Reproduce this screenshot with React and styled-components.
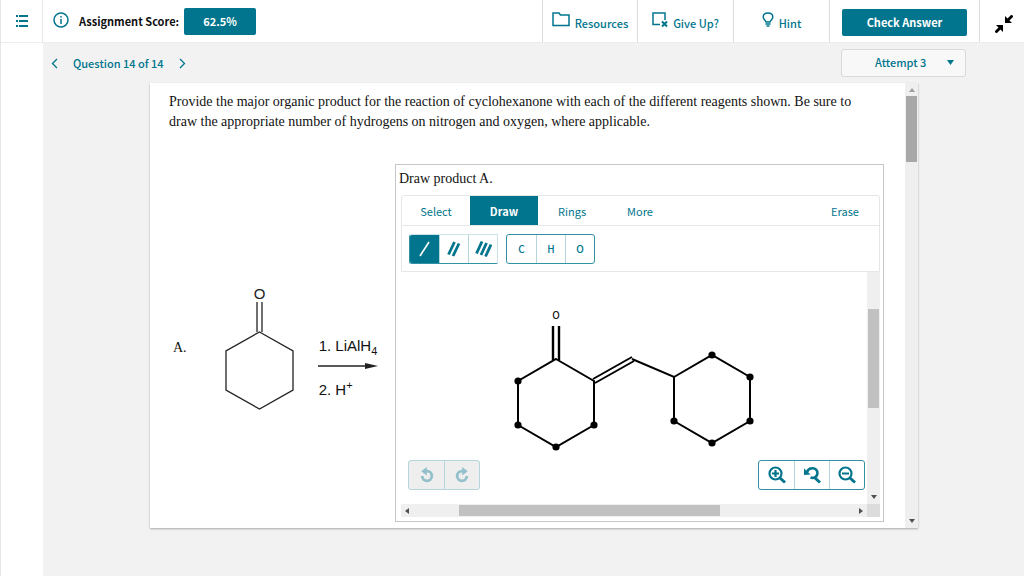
import React, { useState } from "react";
import styled, { createGlobalStyle, css } from "styled-components";

const teal = "#00758d";
const line = "#e6e6e6";

const GlobalStyle = createGlobalStyle`
  * { box-sizing: border-box; }
  body {
    margin: 0;
    background: #f2f2f2;
    font-family: "Noto Sans CJK SC", "Open Sans", sans-serif;
    font-size: 11px;
    line-height: 16px;
    color: #111;
  }
  svg { display: block; flex: none; }
`;

const plainButton = css`
  appearance: none;
  margin: 0;
  padding: 0;
  border: 0;
  background: none;
  color: ${teal};
  font: inherit;
  cursor: pointer;
`;

const Shell = styled.div`
  display: grid;
  grid-template-columns: 43px minmax(0, 1fr);
  min-height: 100vh;
`;

const Rail = styled.aside`
  background: #fff;
  border-left: 1px solid ${line};
`;

const RailButton = styled.button`
  ${plainButton}
  display: flex;
  align-items: center;
  justify-content: center;
  width: 100%;
  height: 43px;
  border-right: 1px solid ${line};
  border-bottom: 1px solid #ececec;
`;

const Header = styled.header`
  display: flex;
  height: 43px;
  background: #fff;
  border-bottom: 1px solid #ececec;
`;

const ScoreArea = styled.div`
  display: flex;
  align-items: center;
  flex: 1;
  padding-left: 10px;
`;

const IconButton = styled.button`
  ${plainButton}
  display: flex;
  padding-bottom: 2px;
`;

const ScoreLabel = styled.span`
  margin: 0 5px 0 10px;
  font-weight: 700;
`;

const Score = styled.output`
  width: 72px;
  border-radius: 2px;
  background: ${teal};
  color: #fff;
  font-weight: 700;
  line-height: 27px;
  text-align: center;
`;

const HeaderButton = styled.button`
  ${plainButton}
  display: flex;
  align-items: center;
  justify-content: center;
  gap: 5px;
  width: ${(p) => p.$width}px;
  border-left: 1px solid #dcdcdc;
  font-weight: 500;
  & svg { margin-bottom: 3px; }
  & span { padding-top: 3px; }
`;

const CollapseButton = styled.button`
  ${plainButton}
  display: flex;
  align-items: center;
  justify-content: center;
  width: 45px;
  padding: 5px 0 0 4px;
  border-left: 1px solid #dcdcdc;
  color: #000;
`;

const CheckArea = styled.div`
  display: flex;
  align-items: center;
  width: 150px;
  padding: 2px 12px 0;
  border-left: 1px solid #dcdcdc;
`;

const CheckButton = styled.button`
  ${plainButton}
  flex: 1;
  height: 27px;
  border-radius: 2px;
  background: ${teal};
  color: #fff;
  font-weight: 700;
`;

const SubBar = styled.nav`
  display: flex;
  align-items: center;
  height: 40px;
  padding: 0 58px 0 8px;
  color: ${teal};
  font-weight: 500;
`;

const Pager = styled.div`
  display: flex;
  align-items: center;
  gap: 15px;
  flex: 1;
`;

const PagerButton = styled.button`
  ${plainButton}
  display: flex;
`;

const AttemptBox = styled.div`
  display: grid;
  align-items: center;
  width: 125px;
  & > * { grid-area: 1 / 1; }
  & svg {
    justify-self: end;
    margin: 0 12px 2px 0;
    pointer-events: none;
  }
`;

const AttemptSelect = styled.select`
  appearance: none;
  width: 100%;
  height: 28px;
  padding: 0 33px 2px;
  border: 1px solid #d9d9d9;
  border-radius: 3px;
  background: #f8f8f8;
  color: ${teal};
  font: inherit;
`;

const Card = styled.main`
  display: flex;
  margin: 0 106px 48px 107px;
  background: #fff;
  box-shadow: 0 1px 2px rgba(0, 0, 0, 0.3);
`;

const Question = styled.section`
  flex: 1;
  min-width: 0;
  padding: 9px 21px 6px 19px;
  font-family: "Liberation Serif", serif;
  font-size: 14px;
  line-height: 20px;
`;

const Prompt = styled.p`
  margin: 0 12px 32px 0;
`;

const QuestionRow = styled.div`
  display: flex;
`;

const Scheme = styled.div`
  display: flex;
  align-items: center;
  flex: none;
  width: 226px;
  padding: 9px 0 0 4px;
  & > svg { margin-left: 38px; }
`;

const Reagents = styled.div`
  margin: 40px 0 0 23px;
  font-family: "Liberation Sans", sans-serif;
  font-size: 15px;
  white-space: nowrap;
  & sub, & sup { font-size: 11px; line-height: 0; }
  & p { margin: 0; padding-left: 1px; }
  & svg { margin: 6px 0 10px; }
`;

const Panel = styled.section`
  flex: 1;
  min-width: 0;
  padding: 4px 3px;
  border: 1px solid #c6c6c6;
`;

const PanelTitle = styled.h2`
  margin: 0 0 6px;
  font-size: 14px;
  font-weight: 400;
  line-height: 20px;
`;

const Editor = styled.div`
  padding-left: 2px;
  font-family: "Noto Sans CJK SC", "Open Sans", sans-serif;
  font-size: 11px;
  line-height: 16px;
`;

const Toolbox = styled.div`
  border: 1px solid ${line};
  border-radius: 3px 3px 0 0;
`;

const Tabs = styled.div`
  display: flex;
  border-bottom: 1px solid ${line};
`;

const Tab = styled.button`
  ${plainButton}
  width: 68px;
  height: 29px;
  background: ${(p) => (p.$active ? teal : "transparent")};
  color: ${(p) => (p.$active ? "#fff" : teal)};
  font-weight: ${(p) => (p.$active ? 700 : 400)};
  &:last-child { margin-left: auto; }
`;

const ToolRow = styled.div`
  display: flex;
  gap: 8px;
  padding: 8px 7px 7px;
`;

const ButtonGroup = styled.div`
  display: flex;
  height: 30px;
  border: 1px solid ${(p) => (p.$muted ? "#b4d5dc" : "#3391a4")};
  ${(p) => p.$soft && "border-right-color: #cde4e9; border-top-color: #cde4e9;"}
  border-radius: ${(p) => (p.$soft ? "3px 0 0 3px" : "3px")};
  overflow: hidden;
  background: ${(p) => (p.$muted ? "#eeeeee" : "#fff")};
`;

const GroupButton = styled.button`
  ${plainButton}
  display: flex;
  align-items: center;
  justify-content: center;
  width: ${(p) => p.$width || 29}px;
  background: ${(p) => (p.$active ? teal : "transparent")};
  color: ${(p) => (p.$active ? "#fff" : teal)};
  font-weight: 500;
  font-size: 10px;
  & + & { border-left: 1px solid ${(p) => (p.$dark ? "#3391a4" : "#b4d5dc")}; }
  &:disabled { color: #93c1cb; cursor: default; }
`;

const Workspace = styled.div`
  display: grid;
  grid-template-columns: minmax(0, 1fr) 13px;
  grid-template-rows: 232px 13px;
`;

const Canvas = styled.div`
  position: relative;
`;

const Overlay = styled.div`
  position: absolute;
  bottom: 14px;
  ${(p) => p.$side}: ${(p) => (p.$side === "left" ? 7 : 2)}px;
`;

const Track = styled.div`
  display: flex;
  flex-direction: ${(p) => (p.$horizontal ? "row" : "column")};
  align-items: center;
  justify-content: space-between;
  flex: none;
  width: ${(p) => (p.$horizontal ? "auto" : "13px")};
  padding: ${(p) => (p.$horizontal ? "0 4px" : "5px 0")};
  background: #efefef;
`;

const Thumb = styled.div`
  flex: none;
  width: ${(p) => (p.$horizontal ? "57%" : "11px")};
  height: ${(p) => (p.$horizontal ? "11px" : p.$length + "px")};
  margin: ${(p) => (p.$horizontal ? `0 auto 0 ${p.$offset}px` : `${p.$offset}px 0 auto`)};
  background: ${(p) => p.$color || "#c1c1c1"};
`;

const Corner = styled.div`
  background: #dcdcdc;
`;

const arrows = {
  up: "M0 4 L3 0 L6 4Z",
  down: "M0 0 L6 0 L3 4Z",
  left: "M4 0 L4 6 L0 3Z",
  right: "M0 0 L4 3 L0 6Z",
};

function Arrow({ dir, color = "#505050" }) {
  const side = dir === "left" || dir === "right";
  return (
    <svg width={side ? 4 : 6} height={side ? 6 : 4} fill={color} aria-hidden="true">
      <path d={arrows[dir]} />
    </svg>
  );
}

const bonds = {
  1: "M4 16 L13 2",
  2: "M2.5 14.5 L8.5 2 M7 16 L13 3.5",
  3: "M1.5 13.5 L7 1.5 M6 15 L11.5 3 M10.5 16.5 L16 4.5",
};

function Bond({ count }) {
  return (
    <svg width="17" height="18" fill="none" stroke="currentColor" strokeWidth={count === 1 ? 1.6 : 2.8} aria-hidden="true">
      <path d={bonds[count]} />
    </svg>
  );
}

function Magnifier({ kind }) {
  return (
    <svg width="18" height="18" viewBox="0 0 18 18" fill="none" stroke="currentColor" strokeWidth="2.2" aria-hidden="true">
      {kind === "reset" ? (
        <>
          <path d="M4 6 C5 3.5 7 2.3 9 2.3 A4.8 4.8 0 1 1 7.5 11.3" strokeWidth="2.6" />
          <path d="M1 2.5 L1 9 L7.5 8.5Z" fill="currentColor" stroke="none" />
        </>
      ) : (
        <>
          <circle cx="7.5" cy="7.5" r="6" />
          <path d={kind === "in" ? "M4 7.5h7M7.5 4v7" : "M4 7.5h7"} />
        </>
      )}
      <path d="M12 12 L17 16.5" strokeWidth="3" />
    </svg>
  );
}

function Turn({ back }) {
  return (
    <svg width="14" height="16" viewBox="0 0 14 16" fill="none" aria-hidden="true">
      <g transform={back ? undefined : "matrix(-1 0 0 1 14 0)"}>
        <path d="M6 4.2 H7 A4.8 4.8 0 1 1 2.2 9" stroke="currentColor" strokeWidth="2.8" />
        <path d="M1.2 4.3 L6.8 0 V8.4Z" fill="currentColor" />
      </g>
    </svg>
  );
}

function Cyclohexanone() {
  return (
    <svg width="70" height="124" fill="none" stroke="#222" strokeWidth="1.3" role="img" aria-label="Cyclohexanone">
      <path d="M34.5 46 L68 65 V104 L34.5 123 L1 104 V65Z" />
      <path d="M32 46 V16 M37 46 V16" />
      <text x="34.5" y="13" textAnchor="middle" fill="#222" stroke="none" fontFamily="Liberation Sans, sans-serif" fontSize="15">O</text>
    </svg>
  );
}

const atoms = [[117, 109], [117, 153], [155, 175], [193, 153], [311, 83], [349, 105], [349, 149], [311, 171], [273, 149]];

function Product() {
  return (
    <svg width="100%" height="232" fill="none" stroke="#000" strokeWidth="2" role="img" aria-label="Drawn structure">
      <path d="M155 87 L193 109 V153 L155 175 L117 153 V109Z" />
      <path d="M152 88 V54 M158 88 V54" strokeWidth="2.4" />
      <path d="M192 107 L231 85 M194 111 L233 89" />
      <path d="M231 87 L273 105 L311 83 L349 105 V149 L311 171 L273 149 V105" />
      {atoms.map(([x, y]) => (
        <circle key={`${x}-${y}`} cx={x} cy={y} r="3.6" fill="#000" stroke="none" />
      ))}
      <text x="155" y="47" textAnchor="middle" fill="#222" stroke="none" fontFamily="Noto Sans CJK SC, sans-serif" fontSize="10" fontWeight="500">O</text>
    </svg>
  );
}

export default function App() {
  const [tab, setTab] = useState("Draw");
  const [bond, setBond] = useState(1);

  return (
    <>
      <GlobalStyle />
      <Shell>
        <Rail>
          <RailButton aria-label="Menu">
            <svg width="12" height="12" stroke="currentColor" strokeWidth="2">
              <path d="M0 1h2M3 1h9M0 6h2M3 6h9M0 11h2M3 11h9" />
            </svg>
          </RailButton>
        </Rail>
        <div>
          <Header>
            <ScoreArea>
              <IconButton aria-label="Information">
                <svg width="16" height="16" fill="none" stroke="currentColor" strokeWidth="1.5">
                  <circle cx="8" cy="8" r="7" />
                  <path d="M8 7v5M8 4v1.5" />
                </svg>
              </IconButton>
              <ScoreLabel>Assignment Score:</ScoreLabel>
              <Score>62.5%</Score>
            </ScoreArea>
            <HeaderButton $width={95}>
              <svg width="18" height="15" fill="none" stroke="currentColor" strokeWidth="1.5">
                <path d="M1 13.5 V1 H7 L8.5 3 H17 V13.5Z" />
              </svg>
              <span>Resources</span>
            </HeaderButton>
            <HeaderButton $width={96}>
              <svg width="16" height="16" fill="none" stroke="currentColor" strokeWidth="1.5">
                <path d="M8 12.5 H1 V1 H13 V8" />
                <path d="M10 9.5 L15 14.5 M15 9.5 L10 14.5" strokeWidth="2" />
              </svg>
              <span>Give Up?</span>
            </HeaderButton>
            <HeaderButton $width={96}>
              <svg width="12" height="15" fill="none" stroke="currentColor" strokeWidth="1.5">
                <path d="M4 10 C4 8.5 1.2 7.5 1.2 5 C1.2 2.5 3.2 1 6 1 C8.8 1 10.8 2.5 10.8 5 C10.8 7.5 8 8.5 8 10Z M3.5 12 H8.5 M4.5 14 H7.5" />
              </svg>
              <span>Hint</span>
            </HeaderButton>
            <CheckArea>
              <CheckButton>Check Answer</CheckButton>
            </CheckArea>
            <CollapseButton aria-label="Exit full screen">
              <svg width="18" height="18" fill="currentColor" stroke="currentColor">
                <path d="M10 1 V8 H17Z M8 10 H1 L8 17Z" stroke="none" />
                <path d="M12 6 L17.5 0.5 M6 12 L0.5 17.5" strokeWidth="2.8" />
              </svg>
            </CollapseButton>
          </Header>
          <SubBar>
            <Pager>
              <PagerButton aria-label="Previous question">
                <svg width="7" height="11" fill="none" stroke="currentColor" strokeWidth="1.3"><path d="M6 1 L1.5 5.5 L6 10" /></svg>
              </PagerButton>
              <span>Question 14 of 14</span>
              <PagerButton aria-label="Next question">
                <svg width="7" height="11" fill="none" stroke="currentColor" strokeWidth="1.3"><path d="M1 1 L5.5 5.5 L1 10" /></svg>
              </PagerButton>
            </Pager>
            <AttemptBox>
              <AttemptSelect aria-label="Attempt" defaultValue="3">
                <option value="3">Attempt 3</option>
              </AttemptSelect>
              <svg width="7" height="5" fill="currentColor"><path d="M0 0 H7 L3.5 5Z" /></svg>
            </AttemptBox>
          </SubBar>
          <Card>
            <Question>
              <Prompt>
                Provide the major organic product for the reaction of cyclohexanone with each of the different
                reagents shown. Be sure to draw the appropriate number of hydrogens on nitrogen and oxygen, where
                applicable.
              </Prompt>
              <QuestionRow>
                <Scheme>
                  <span>A.</span>
                  <Cyclohexanone />
                  <Reagents>
                    <p>1. LiAlH<sub>4</sub></p>
                    <svg width="60" height="8" aria-hidden="true">
                      <path d="M0 4 H50" stroke="#222" strokeWidth="1.3" />
                      <path d="M47 1 L60 4 L47 7Z" fill="#222" />
                    </svg>
                    <p>2. H<sup>+</sup></p>
                  </Reagents>
                </Scheme>
                <Panel>
                  <PanelTitle>Draw product A.</PanelTitle>
                  <Editor>
                    <Toolbox>
                      <Tabs>
                        {["Select", "Draw", "Rings", "More", "Erase"].map((name) => (
                          <Tab key={name} $active={tab === name} onClick={() => setTab(name)}>{name}</Tab>
                        ))}
                      </Tabs>
                      <ToolRow>
                        <ButtonGroup $soft>
                          {[1, 2, 3].map((n) => (
                            <GroupButton key={n} $active={bond === n} onClick={() => setBond(n)} aria-label={`Bond order ${n}`}>
                              <Bond count={n} />
                            </GroupButton>
                          ))}
                        </ButtonGroup>
                        <ButtonGroup>
                          {["C", "H", "O"].map((el) => (
                            <GroupButton key={el} $dark>{el}</GroupButton>
                          ))}
                        </ButtonGroup>
                      </ToolRow>
                    </Toolbox>
                    <Workspace>
                      <Canvas>
                        <Product />
                        <Overlay $side="left">
                          <ButtonGroup $muted>
                            <GroupButton $width={35} disabled aria-label="Undo"><Turn back /></GroupButton>
                            <GroupButton $width={35} disabled aria-label="Redo"><Turn /></GroupButton>
                          </ButtonGroup>
                        </Overlay>
                        <Overlay $side="right">
                          <ButtonGroup>
                            <GroupButton $width={35} aria-label="Zoom in"><Magnifier kind="in" /></GroupButton>
                            <GroupButton $width={35} aria-label="Reset zoom"><Magnifier kind="reset" /></GroupButton>
                            <GroupButton $width={35} aria-label="Zoom out"><Magnifier kind="out" /></GroupButton>
                          </ButtonGroup>
                        </Overlay>
                      </Canvas>
                      <Track>
                        <Thumb $length={99} $offset={32} />
                        <Arrow dir="down" />
                      </Track>
                      <Track $horizontal>
                        <Arrow dir="left" />
                        <Thumb $horizontal $offset={50} />
                        <Arrow dir="right" />
                      </Track>
                      <Corner />
                    </Workspace>
                  </Editor>
                </Panel>
              </QuestionRow>
            </Question>
            <Track>
              <Arrow dir="up" color="#a0a0a0" />
              <Thumb $length={66} $offset={4} $color="#a8a8a8" />
              <Arrow dir="down" />
            </Track>
          </Card>
        </div>
      </Shell>
    </>
  );
}
